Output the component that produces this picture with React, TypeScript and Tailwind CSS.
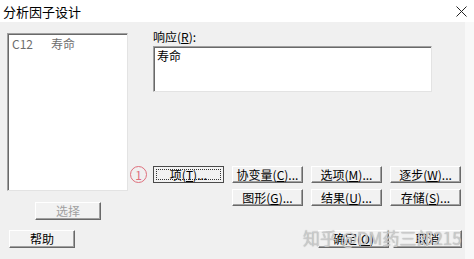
import { ReactNode } from 'react';

const font = { fontFamily: "'Noto Sans CJK SC', 'Noto Sans', sans-serif" };

function Btn({ children, className = '', disabled = false }: { children: ReactNode; className?: string; disabled?: boolean }) {
  return (
    <div
      className={`flex items-center justify-center h-[17px] bg-[#f2f2f2] border border-t-white border-l-white border-r-[#696969] border-b-[#696969] shadow-[inset_-1px_-1px_0_#a0a0a0] text-[12px] leading-none ${
        disabled ? 'text-[#a0a0a0]' : 'text-black'
      } ${className}`}
    >
      {children}
    </div>
  );
}

function Key({ k }: { k: string }) {
  return <span className="underline underline-offset-1">{k}</span>;
}

export default function App() {
  return (
    <div className="relative w-[474px] h-[259px] bg-[#f8f8f8] flex flex-col overflow-hidden" style={font}>
      {/* title bar */}
      <div className="h-[22px] bg-white flex items-center justify-between pl-[3px] pr-[7px] shrink-0">
        <span className="text-[13px] text-black leading-none">分析因子设计</span>
        <svg width="11" height="11" viewBox="0 0 11 11" className="text-[#222]">
          <path d="M0.5 0.5 L10.5 10.5 M10.5 0.5 L0.5 10.5" stroke="currentColor" strokeWidth="1" />
        </svg>
      </div>

      {/* body */}
      <div className="flex-1 bg-[#f0f0f0] mr-[9px] flex">
        {/* left column */}
        <div className="flex flex-col pl-[7px] pt-[11px] w-[153px] shrink-0">
          <div className="w-[121px] h-[158px] bg-white border border-t-[#a0a0a0] border-l-[#a0a0a0] border-r-[#e3e3e3] border-b-[#e3e3e3] shadow-[inset_1px_1px_0_#696969] px-[4px] pt-[3px]">
            <div className="flex text-[12px] leading-[14px] text-[#6d6d6d]">
              <span className="w-[39px]">C12</span>
              <span>寿命</span>
            </div>
          </div>
          <Btn disabled className="w-[66px] h-[18px] ml-[28px] mt-[11px]">选择</Btn>
          <Btn className="w-[66px] h-[18px] ml-[2px] mt-[10px]">帮助</Btn>
        </div>

        {/* right column */}
        <div className="flex flex-col flex-1 pt-[8px] pr-[3px]">
          <div className="text-[12px] leading-[14px] text-black">
            响应(<Key k="R" />):
          </div>
          <div className="mt-[2px] w-[279px] h-[46px] bg-white border border-t-[#a0a0a0] border-l-[#a0a0a0] border-r-[#e3e3e3] border-b-[#e3e3e3] shadow-[inset_1px_1px_0_#696969] px-[3px] pt-[2px] text-[12px] leading-[14px] text-black">
            寿命
          </div>

          <div className="mt-[74px] grid grid-cols-[71px_71px_71px_71px] gap-x-[8px] gap-y-[6px]">
            <div className="relative">
              <div className="absolute -left-[23px] top-0 w-[17px] h-[17px] rounded-full border-[1.5px] border-[#df6f7c] flex items-center justify-center text-[12px] leading-none text-[#df6f7c]">
                1
              </div>
              <div className="h-[17px] bg-[#f2f2f2] border border-[#4a4a4a] p-[2px] flex">
                <div className="flex-1 border border-dotted border-[#333] flex items-center justify-center text-[12px] leading-none text-black">
                  项(<Key k="T" />)...
                </div>
              </div>
            </div>
            <Btn>协变量(<Key k="C" />)...</Btn>
            <Btn>选项(<Key k="M" />)...</Btn>
            <Btn>逐步(<Key k="W" />)...</Btn>
            <Btn className="col-start-2">图形(<Key k="G" />)...</Btn>
            <Btn>结果(<Key k="U" />)...</Btn>
            <Btn>存储(<Key k="S" />)...</Btn>
          </div>

          <div className="mt-[24px] flex justify-end gap-[4px]">
            <Btn className="w-[71px] h-[18px]">确定(<Key k="O" />)</Btn>
            <Btn className="w-[69px] h-[18px]">取消</Btn>
          </div>
        </div>
      </div>

      {/* watermark */}
      <div className="absolute left-[303px] top-[228px] text-[17px] leading-[20px] text-[#d4d4d4]/80 [text-shadow:0_0_1px_#999] pointer-events-none whitespace-nowrap">
        知乎 @DM药三郎215
      </div>
    </div>
  );
}
